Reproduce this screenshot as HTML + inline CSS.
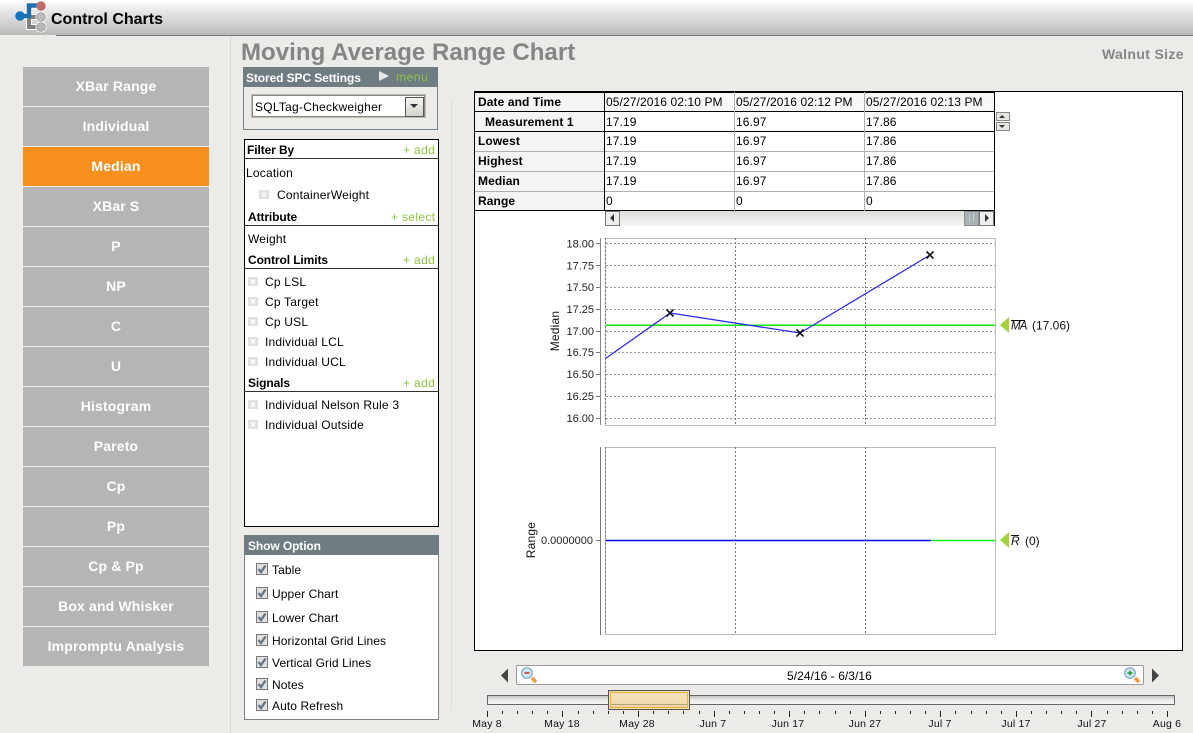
<!DOCTYPE html>
<html><head><meta charset="utf-8"><title>Control Charts</title>
<style>
html,body{margin:0;padding:0;width:1193px;height:733px;overflow:hidden;background:#ECEBE8;font-family:"Liberation Sans",Arial,sans-serif;color:#000}
.a{position:absolute}
.t{position:absolute;white-space:nowrap;line-height:14px;font-size:12px;letter-spacing:.2px}
.o{letter-spacing:.1px}
.b{font-weight:bold;letter-spacing:.1px}
.p{font-weight:bold;letter-spacing:-.1px}
.g{color:#8CC63F;letter-spacing:.35px}
.nav{position:absolute;left:23px;width:186px;height:39px;background:#B5B5B5;color:#fff;font-weight:bold;font-size:14px;letter-spacing:.15px;line-height:39px;text-align:center}
.c{position:absolute;left:256px;width:10px;height:10px;border:1px solid #777;background:#e0e0e0}
.h{position:absolute;left:244px;width:195px;height:1px;background:#333}
.td{position:absolute;white-space:nowrap;font-size:12px;line-height:14px;letter-spacing:.1px}
svg{position:absolute;left:0;top:0}
svg text{font-family:"Liberation Sans",Arial,sans-serif}
</style></head><body>

<!-- header -->
<div class="a" style="left:0;top:0;width:1193px;height:35px;background:linear-gradient(#fff,#e9e9e9 30%,#b9b9b9)"></div>
<div class="a" style="left:56px;top:35px;width:1137px;height:1px;background:#77777f"></div>
<div class="t" style="left:51px;top:11px;font-size:16px;line-height:17px;letter-spacing:0;font-weight:bold">Control Charts</div>

<!-- dividers -->
<div class="a" style="left:230px;top:36px;width:1px;height:697px;background:#DADAD7"></div>
<div class="a" style="left:451px;top:99px;width:1px;height:611px;background:#DDDDDA"></div>

<!-- sidebar -->
<div class="nav" style="top:67px">XBar Range</div>
<div class="nav" style="top:107px">Individual</div>
<div class="nav" style="top:147px;background:#F7901E">Median</div>
<div class="nav" style="top:187px">XBar S</div>
<div class="nav" style="top:227px">P</div>
<div class="nav" style="top:267px">NP</div>
<div class="nav" style="top:307px">C</div>
<div class="nav" style="top:347px">U</div>
<div class="nav" style="top:387px">Histogram</div>
<div class="nav" style="top:427px">Pareto</div>
<div class="nav" style="top:467px">Cp</div>
<div class="nav" style="top:507px">Pp</div>
<div class="nav" style="top:547px">Cp &amp; Pp</div>
<div class="nav" style="top:587px">Box and Whisker</div>
<div class="nav" style="top:627px">Impromptu Analysis</div>

<!-- titles -->
<div class="t" style="left:241px;top:39px;font-size:24px;line-height:28px;font-weight:bold;color:#858585;letter-spacing:.05px">Moving Average Range Chart</div>
<div class="t" style="left:1102px;top:47px;font-size:14px;font-weight:bold;color:#858585;letter-spacing:.35px">Walnut Size</div>

<!-- stored settings -->
<div class="a" style="left:243px;top:67px;width:193px;height:62px;border:1px solid #76838A;border-top:0"></div>
<div class="a" style="left:243px;top:67px;width:195px;height:20px;background:#6F7C82"></div>
<div class="t p" style="left:246px;top:71px;color:#fff">Stored SPC Settings</div>
<div class="a" style="left:379px;top:71px;width:0;height:0;border-left:10px solid #e8e8e8;border-top:5px solid transparent;border-bottom:5px solid transparent"></div>
<div class="t g" style="left:396px;top:70px;letter-spacing:.6px">menu</div>
<div class="a" style="left:252px;top:95px;width:171px;height:20px;background:#fff;border:1px solid #8a8a80;outline:1px solid #bdbdb6"></div>
<div class="t" style="left:255px;top:100px;letter-spacing:.25px">SQLTag-Checkweigher</div>
<div class="a" style="left:405px;top:97px;width:17px;height:18px;background:linear-gradient(#f4f4f0,#d4d4ce);border:1px solid #555"></div>
<div class="a" style="left:410px;top:104px;width:0;height:0;border-top:4px solid #333;border-left:4px solid transparent;border-right:4px solid transparent"></div>

<!-- filter panel -->
<div class="a" style="left:244px;top:139px;width:193px;height:386px;background:#fff;border:1px solid #000"></div>
<div class="t p" style="left:247px;top:143px">Filter By</div><div class="t g" style="left:403px;top:143px">+ add</div>
<div class="h" style="top:158px"></div>
<div class="t" style="left:246px;top:166px">Location</div>
<div class="t" style="left:277px;top:188px">ContainerWeight</div>
<div class="t p" style="left:248px;top:210px">Attribute</div><div class="t g" style="left:391px;top:210px">+ select</div>
<div class="h" style="top:225px"></div>
<div class="t" style="left:248px;top:232px">Weight</div>
<div class="t p" style="left:248px;top:253px">Control Limits</div><div class="t g" style="left:403px;top:253px">+ add</div>
<div class="h" style="top:268px"></div>
<div class="t" style="left:265px;top:275px">Cp LSL</div>
<div class="t" style="left:265px;top:295px">Cp Target</div>
<div class="t" style="left:265px;top:315px">Cp USL</div>
<div class="t" style="left:265px;top:335px">Individual LCL</div>
<div class="t" style="left:265px;top:355px">Individual UCL</div>
<div class="t p" style="left:248px;top:376px">Signals</div><div class="t g" style="left:403px;top:376px">+ add</div>
<div class="h" style="top:391px"></div>
<div class="t" style="left:265px;top:398px">Individual Nelson Rule 3</div>
<div class="t" style="left:265px;top:418px">Individual Outside</div>

<!-- show option -->
<div class="a" style="left:244px;top:535px;width:193px;height:183px;background:#fff;border:1px solid #7a8287"></div>
<div class="a" style="left:244px;top:535px;width:195px;height:20px;background:#6F7C82"></div>
<div class="t p" style="left:248px;top:539px;color:#fff">Show Option</div>
<div class="c" style="top:563px"></div><div class="t o" style="left:272px;top:563px">Table</div>
<div class="c" style="top:587px"></div><div class="t o" style="left:272px;top:587px">Upper Chart</div>
<div class="c" style="top:611px"></div><div class="t o" style="left:272px;top:611px">Lower Chart</div>
<div class="c" style="top:634px"></div><div class="t o" style="left:272px;top:634px">Horizontal Grid Lines</div>
<div class="c" style="top:656px"></div><div class="t o" style="left:272px;top:656px">Vertical Grid Lines</div>
<div class="c" style="top:678px"></div><div class="t o" style="left:272px;top:678px">Notes</div>
<div class="c" style="top:699px"></div><div class="t o" style="left:272px;top:699px">Auto Refresh</div>

<!-- main panel -->
<div class="a" style="left:474px;top:91px;width:707px;height:558px;background:#fff;border:1px solid #000"></div>

<!-- table -->
<div class="a" style="left:475px;top:92px;width:129px;height:118px;background:#F4F4F2"></div>
<div class="a" style="left:605px;top:92px;width:389px;height:19px;background:#F8F8F6"></div>
<div class="a" style="left:475px;top:92px;width:520px;height:1px;background:#000"></div>
<div class="a" style="left:475px;top:111px;width:520px;height:1px;background:#000"></div>
<div class="a" style="left:475px;top:131px;width:520px;height:1px;background:#000"></div>
<div class="a" style="left:475px;top:151px;width:520px;height:1px;background:#B0B0B0"></div>
<div class="a" style="left:475px;top:171px;width:520px;height:1px;background:#B0B0B0"></div>
<div class="a" style="left:475px;top:191px;width:520px;height:1px;background:#B0B0B0"></div>
<div class="a" style="left:475px;top:210px;width:520px;height:1px;background:#000"></div>
<div class="a" style="left:604px;top:92px;width:1px;height:119px;background:#000"></div>
<div class="a" style="left:734px;top:92px;width:1px;height:119px;background:#B0B0B0"></div>
<div class="a" style="left:864px;top:92px;width:1px;height:119px;background:#B0B0B0"></div>
<div class="a" style="left:994px;top:92px;width:1px;height:134px;background:#000"></div>

<div class="t b" style="left:478px;top:95px">Date and Time</div>
<div class="t b" style="left:485px;top:115px">Measurement 1</div>
<div class="t b" style="left:478px;top:134px">Lowest</div>
<div class="t b" style="left:478px;top:154px">Highest</div>
<div class="t b" style="left:478px;top:174px">Median</div>
<div class="t b" style="left:478px;top:194px">Range</div>

<div class="td" style="left:606px;top:95px">05/27/2016 02:10 PM</div>
<div class="td" style="left:736px;top:95px">05/27/2016 02:12 PM</div>
<div class="td" style="left:866px;top:95px">05/27/2016 02:13 PM</div>
<div class="td" style="left:606px;top:115px">17.19</div><div class="td" style="left:736px;top:115px">16.97</div><div class="td" style="left:866px;top:115px">17.86</div>
<div class="td" style="left:606px;top:134px">17.19</div><div class="td" style="left:736px;top:134px">16.97</div><div class="td" style="left:866px;top:134px">17.86</div>
<div class="td" style="left:606px;top:154px">17.19</div><div class="td" style="left:736px;top:154px">16.97</div><div class="td" style="left:866px;top:154px">17.86</div>
<div class="td" style="left:606px;top:174px">17.19</div><div class="td" style="left:736px;top:174px">16.97</div><div class="td" style="left:866px;top:174px">17.86</div>
<div class="td" style="left:606px;top:194px">0</div><div class="td" style="left:736px;top:194px">0</div><div class="td" style="left:866px;top:194px">0</div>

<!-- table scrollbar -->
<div class="a" style="left:605px;top:211px;width:389px;height:15px;background:linear-gradient(#dcdcd8,#f6f6f4)"></div>
<div class="a" style="left:605px;top:211px;width:13px;height:13px;background:#eee;border:1px solid #777"></div>
<div class="a" style="left:610px;top:214px;width:0;height:0;border-right:4px solid #333;border-top:4px solid transparent;border-bottom:4px solid transparent"></div>
<div class="a" style="left:964px;top:211px;width:13px;height:13px;background:#A9B1B6;border:1px solid #8a9196"></div>
<div class="a" style="left:969px;top:214px;width:3px;height:8px;border-left:1px solid #c8ced2;border-right:1px solid #c8ced2"></div>
<div class="a" style="left:979px;top:211px;width:13px;height:13px;background:#eee;border:1px solid #777"></div>
<div class="a" style="left:985px;top:214px;width:0;height:0;border-left:4px solid #333;border-top:4px solid transparent;border-bottom:4px solid transparent"></div>
<!-- spinner -->
<div class="a" style="left:996px;top:112px;width:12px;height:7px;background:#E6E6E2;border:1px solid #888"></div>
<div class="a" style="left:999px;top:115px;width:0;height:0;border-bottom:3px solid #333;border-left:3px solid transparent;border-right:3px solid transparent"></div>
<div class="a" style="left:996px;top:122px;width:12px;height:7px;background:#E6E6E2;border:1px solid #888"></div>
<div class="a" style="left:999px;top:125px;width:0;height:0;border-top:3px solid #333;border-left:3px solid transparent;border-right:3px solid transparent"></div>

<!-- bottom range -->
<div class="a" style="left:516px;top:665px;width:626px;height:18px;background:#fff;border:1px solid #999;border-radius:2px"></div>
<div class="t" style="left:787px;top:669px;letter-spacing:.05px">5/24/16 - 6/3/16</div>
<div class="a" style="left:487px;top:695px;width:686px;height:8px;background:linear-gradient(#c4c4c0,#ecebe8 50%,#f4f4f2);border:1px solid #666"></div>
<div class="a" style="left:608px;top:690px;width:80px;height:18px;background:#F3DDB4;border:1px solid #555"></div>
<div class="a" style="left:610px;top:692px;width:76px;height:14px;background:linear-gradient(#F7E3BF,#EFD5A6);border:1px solid #F0B030"></div>
<div class="a" style="left:611px;top:704px;width:76px;height:1px;background:#b9a27a"></div>

<svg width="1193" height="733" viewBox="0 0 1193 733">
 <!-- logo -->
 <path d="M20 16H29V5.500H38" fill="none" stroke="#fff" stroke-width="7"/>
 <path d="M29 17V27H38M29 17H38" fill="none" stroke="#fff" stroke-width="6"/>
 <path d="M29 17V27H38M29 17H38" fill="none" stroke="#7f7f7f" stroke-width="4"/>
 <path d="M20 16H29V5.500H38" fill="none" stroke="#1F6FA8" stroke-width="4.500"/>
 <circle cx="20" cy="16" r="4.800" fill="#1573BC"/>
 <circle cx="41" cy="17" r="5.500" fill="#fff"/><circle cx="41" cy="17" r="4.300" fill="#BDBDBD" stroke="#888" stroke-width=".7"/>
 <circle cx="41" cy="27" r="5.500" fill="#fff"/><circle cx="41" cy="27" r="4.300" fill="#B8B8B8" stroke="#888" stroke-width=".7"/>
 <circle cx="41" cy="6" r="4.600" fill="#C26A6A" stroke="#999" stroke-width=".5"/>

 <!-- remove icons -->
 <path d="M248 277h10v9h-10zM248 297h10v9h-10zM248 317h10v9h-10zM248 337h10v9h-10zM248 357h10v9h-10zM248 400h10v9h-10zM248 420h10v9h-10zM259 190h10v9h-10z" fill="#E0E0E0"/>
 <path d="M251 279.500l4 4m0-4l-4 4M251 299.500l4 4m0-4l-4 4M251 319.500l4 4m0-4l-4 4M251 339.500l4 4m0-4l-4 4M251 359.500l4 4m0-4l-4 4M251 402.500l4 4m0-4l-4 4M251 422.500l4 4m0-4l-4 4M262 192.500l4 4m0-4l-4 4" stroke="#fff" stroke-width="1.500" fill="none"/>

 <!-- upper chart -->
 <rect x="605.500" y="238.500" width="390" height="187" fill="#fff" stroke="#BBB"/>
 <g stroke="#999" stroke-dasharray="2 2" fill="none">
  <path d="M606 243.500H995M606 265.500H995M606 287.500H995M606 309.500H995M606 331.500H995M606 352.500H995M606 374.500H995M606 396.500H995M606 418.500H995"/>
  <path d="M605.500 238V425M735.500 238V425M865.500 238V425" stroke="#777"/>
 </g>
 <path d="M600.500 238V425" stroke="#8a8a8a" fill="none"/>
 <path d="M596 243.500h4M596 265.500h4M596 287.500h4M596 309.500h4M596 331.500h4M596 352.500h4M596 374.500h4M596 396.500h4M596 418.500h4" stroke="#777" fill="none"/>
 <g font-size="11" fill="#222" text-anchor="end">
  <text x="594" y="247.500">18.00</text><text x="594" y="269.500">17.75</text><text x="594" y="291">17.50</text><text x="594" y="313">17.25</text><text x="594" y="335">17.00</text><text x="594" y="356">16.75</text><text x="594" y="378">16.50</text><text x="594" y="400">16.25</text><text x="594" y="422">16.00</text>
 </g>
 <text transform="translate(559,331) rotate(-90)" font-size="12" text-anchor="middle" fill="#111" letter-spacing=".2">Median</text>
 <path d="M606 325.250H995" stroke="#10EE10" stroke-width="1.600" fill="none"/>
 <path d="M605.500 358.500L670 313L800 333L930 255" stroke="#2A2AF0" stroke-width="1.300" fill="none"/>
 <path d="M666.500 309.500l7 7m0-7l-7 7M796.500 329.500l7 7m0-7l-7 7M926.500 251.500l7 7m0-7l-7 7" stroke="#111" stroke-width="1.600" fill="none"/>
 <path d="M1000 325l9-8v16z" fill="#A2D23C"/>
 <text x="1011" y="329.500" font-size="11.500" font-style="italic" fill="#111" letter-spacing="-.8">MA</text>
 <path d="M1011 320.500h14" stroke="#111" fill="none"/>
 <text x="1032" y="329.500" font-size="12" fill="#111">(17.06)</text>

 <!-- lower chart -->
 <rect x="605.500" y="447.500" width="390" height="187" fill="#fff" stroke="#BBB"/>
 <path d="M605.500 447V634M735.500 447V634M865.500 447V634" stroke="#777" stroke-dasharray="2 2" fill="none"/>
 <path d="M600.500 447V635" stroke="#777" fill="none"/>
 <path d="M596 540.500h4" stroke="#777" fill="none"/>
 <text x="593" y="544" font-size="11" fill="#222" text-anchor="end">0.0000000</text>
 <text transform="translate(535,540) rotate(-90)" font-size="12" text-anchor="middle" fill="#111" letter-spacing=".2">Range</text>
 <path d="M606 540.500H931" stroke="#0A0AF0" stroke-width="1.500" fill="none"/>
 <path d="M931 540.500H995" stroke="#10EE10" stroke-width="1.600" fill="none"/>
 <path d="M1000 540l9-8v16z" fill="#A2D23C"/>
 <text x="1011" y="545" font-size="12" font-style="italic" fill="#111">R</text>
 <path d="M1011 535.500h8" stroke="#111" fill="none"/>
 <text x="1025" y="545" font-size="12" fill="#111">(0)</text>

 <!-- nav arrows -->
 <path d="M501 675.500l7-7v14z" fill="#444"/>
 <path d="M1159 675.500l-7-7v14z" fill="#444"/>

 <!-- magnifiers -->
 <g>
  <path d="M532 678l4 4" stroke="#EE9A3C" stroke-width="3.500" fill="none"/>
  <circle cx="527" cy="673" r="5.300" fill="#CFE5F4" stroke="#6B9DBD"/>
  <path d="M524.500 673h5" stroke="#C8201C" stroke-width="1.400" fill="none"/>
  <path d="M1135 678l4 4" stroke="#EE9A3C" stroke-width="3.500" fill="none"/>
  <circle cx="1130" cy="673" r="5.300" fill="#CFE5F4" stroke="#6B9DBD"/>
  <path d="M1127.500 673h5M1130 670.500v5" stroke="#1E9A2C" stroke-width="1.400" fill="none"/>
 </g>

 <!-- timeline ticks -->
 <path d="M487.500 711v6M562.500 711v6M638.500 711v6M714.500 711v6M789.500 711v6M865.500 711v6M940.500 711v6M1016.500 711v6M1091.500 711v6M1167.500 711v6" stroke="#222" fill="none"/>
 <path d="M502.500 711v3M517.500 711v3M532.500 711v3M547.500 711v3M578.500 711v3M593.500 711v3M608.500 711v3M623.500 711v3M653.500 711v3M668.500 711v3M683.500 711v3M699.500 711v3M729.500 711v3M744.500 711v3M759.500 711v3M774.500 711v3M804.500 711v3M819.500 711v3M835.500 711v3M850.500 711v3M880.500 711v3M895.500 711v3M910.500 711v3M925.500 711v3M955.500 711v3M971.500 711v3M986.500 711v3M1001.500 711v3M1031.500 711v3M1046.500 711v3M1061.500 711v3M1076.500 711v3M1107.500 711v3M1122.500 711v3M1137.500 711v3M1152.500 711v3" stroke="#222" fill="none"/>
 <g font-size="10.500" fill="#111" text-anchor="middle" letter-spacing=".2">
  <text x="487" y="727">May 8</text><text x="562" y="727">May 18</text><text x="637" y="727">May 28</text><text x="713" y="727">Jun 7</text><text x="788" y="727">Jun 17</text><text x="865" y="727">Jun 27</text><text x="940" y="727">Jul 7</text><text x="1016" y="727">Jul 17</text><text x="1092" y="727">Jul 27</text><text x="1167" y="727">Aug 6</text>
 </g>

 <!-- checkbox ticks -->
 <g fill="none" stroke="#66788A" stroke-width="2.400">
  <path d="M258.500 569l2.500 3 4.500-6.500M258.500 593l2.500 3 4.500-6.500M258.500 617l2.500 3 4.500-6.500M258.500 640l2.500 3 4.500-6.500M258.500 662l2.500 3 4.500-6.500M258.500 684l2.500 3 4.500-6.500M258.500 705l2.500 3 4.500-6.500"/>
 </g>
</svg>
</body></html>
